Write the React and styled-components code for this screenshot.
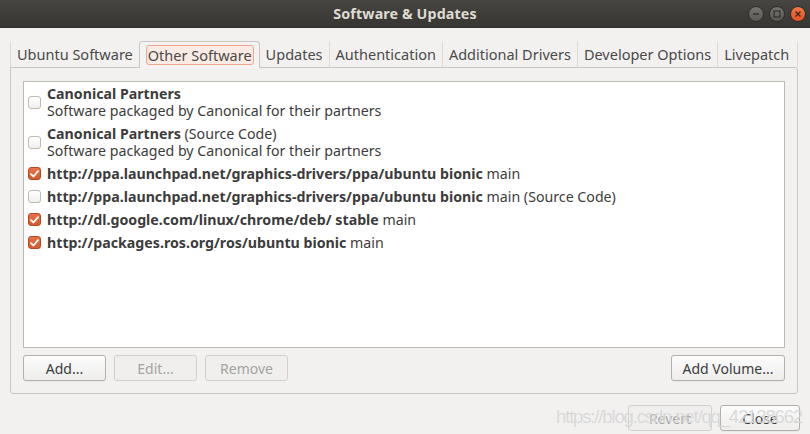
import React from "react";
import styled, { createGlobalStyle, css } from "styled-components";

const GlobalStyle = createGlobalStyle`
  html, body { margin: 0; padding: 0; background: #f2f1f0; }
  body { font-family: "Noto Sans", "Open Sans", "DejaVu Sans", sans-serif; }
  * { box-sizing: border-box; }
`;

const Window = styled.div`
  position: relative;
  width: 810px;
  height: 434px;
  overflow: hidden;
  background: #f2f1f0;
  display: flex;
  flex-direction: column;
  color: #3c3c3c;
  font-size: 14px;
`;

const TitleBar = styled.div`
  height: 28px;
  flex: none;
  display: grid;
  grid-template-columns: 1fr auto 1fr;
  align-items: center;
  background: linear-gradient(#474642, #3c3b37 60%, #383733);
  border-bottom: 1px solid #2f2e2b;
`;

const Title = styled.div`
  grid-column: 2;
  color: #dfdbd2;
  font-weight: bold;
  font-size: 14.3px;
  letter-spacing: 0.1px;
`;

const Controls = styled.div`
  grid-column: 3;
  justify-self: end;
  display: flex;
  gap: 5px;
  padding-right: 4px;
`;

const CircleBtn = styled.div`
  width: 16px;
  height: 16px;
  border-radius: 50%;
  display: flex;
  align-items: center;
  justify-content: center;
  border: 1px solid #2e2d2a;
  ${(p) =>
    p.$close
      ? css`background: linear-gradient(#f5774a, #e4501f);`
      : css`background: linear-gradient(#76746f, #5a5854);`}
`;

const Content = styled.div`
  flex: 1;
  display: flex;
  flex-direction: column;
  padding: 13px 12px 0 10px;
`;

const TabStrip = styled.div`
  display: flex;
  align-items: flex-end;
  height: 26px;
`;

const Tab = styled.div`
  position: relative;
  height: 26px;
  display: flex;
  align-items: center;
  padding: 0 6px;
  color: #4a4a48;
  font-size: 14.5px;
  white-space: nowrap;
  ${(p) =>
    p.$active
      ? css`
          height: 27px;
          margin-bottom: -1px;
          z-index: 1;
          padding: 0 5px 0 6px;
          background: #f4f3f2;
          border: 1px solid #c9c5c0;
          border-bottom: none;
          border-radius: 4px 4px 0 0;
        `
      : css`
          border-left: ${p.$noLeft ? "none" : "1px solid #dedbd7"};
          border-right: ${p.$last ? "1px solid #dedbd7" : "none"};
        `}
  ${(p) => p.$last && css`flex: 1;`}
`;

const FocusLabel = styled.span`
  border: 1px solid #eea68c;
  background: #fbebe5;
  border-radius: 3px;
  padding: 0 1px;
  line-height: 18px;
`;

const Frame = styled.div`
  border: 1px solid #c9c5c0;
  border-radius: 0 3px 3px 3px;
  padding: 13px 12px 12px 12px;
  display: flex;
  flex-direction: column;
`;

const List = styled.div`
  height: 267px;
  background: #ffffff;
  border: 1px solid #bcb8b3;
  display: flex;
  flex-direction: column;
`;

const Row = styled.div`
  display: flex;
  align-items: center;
  padding: 3px 4px;
  gap: 6px;
`;

const Check = styled.div`
  flex: none;
  width: 13px;
  height: 13px;
  border-radius: 3px;
  display: flex;
  align-items: center;
  justify-content: center;
  ${(p) =>
    p.$on
      ? css`
          background: linear-gradient(#e8714a, #d55a2e);
          border: 1px solid #b4491f;
        `
      : css`
          background: linear-gradient(#ffffff, #f1f0ef);
          border: 1px solid #bdb9b4;
        `}
`;

const Label = styled.div`
  line-height: 17px;
  font-size: 14.2px;
  color: #3c3c3c;
  white-space: nowrap;
`;

const B = styled.b`
  font-weight: bold;
`;

const ButtonRow = styled.div`
  margin-top: 7px;
  display: flex;
  gap: 8px;
`;

const Button = styled.div`
  height: 26px;
  min-width: ${(p) => p.$w || 83}px;
  padding: 0 10px;
  display: flex;
  align-items: center;
  justify-content: center;
  border-radius: 3px;
  font-size: 14px;
  ${(p) =>
    p.$disabled
      ? css`
          color: #a3a3a2;
          border: 1px solid #d3d0cc;
          background: #f0efee;
        `
      : css`
          color: #3c3c3c;
          border: 1px solid #b3afaa;
          background: linear-gradient(#fcfcfc, #eeedec);
          box-shadow: 0 1px 0 rgba(0, 0, 0, 0.04);
        `}
  ${(p) => p.$push && css`margin-left: auto;`}
`;

const DialogActions = styled.div`
  margin-top: 11px;
  display: flex;
  justify-content: flex-end;
  gap: 8px;
  margin-right: -2px;
`;

const Watermark = styled.div`
  position: absolute;
  left: 556px;
  top: 406px;
  font-family: "Liberation Sans", Arial, sans-serif;
  font-size: 18.5px;
  letter-spacing: -1.15px;
  color: rgba(205, 205, 205, 0.75);
  text-shadow: 0 0 1px rgba(255, 255, 255, 0.6);
  pointer-events: none;
  white-space: nowrap;
`;

const CheckMark = () => (
  <svg width="9" height="8" viewBox="0 0 9 8">
    <path d="M1 4.2 L3.5 6.5 L8 1.2" fill="none" stroke="#ffffff" strokeWidth="1.8" strokeLinecap="round" strokeLinejoin="round" />
  </svg>
);

const tabs = [
  "Ubuntu Software",
  "Other Software",
  "Updates",
  "Authentication",
  "Additional Drivers",
  "Developer Options",
  "Livepatch",
];

const sources = [
  { on: false, content: (<><B>Canonical Partners</B><br />Software packaged by Canonical for their partners</>) },
  { on: false, content: (<><B>Canonical Partners</B> (Source Code)<br />Software packaged by Canonical for their partners</>) },
  { on: true, content: (<><B>http://ppa.launchpad.net/graphics-drivers/ppa/ubuntu bionic</B> main</>) },
  { on: false, content: (<><B>http://ppa.launchpad.net/graphics-drivers/ppa/ubuntu bionic</B> main (Source Code)</>) },
  { on: true, content: (<><B>http://dl.google.com/linux/chrome/deb/ stable</B> main</>) },
  { on: true, content: (<><B>http://packages.ros.org/ros/ubuntu bionic</B> main</>) },
];

export default function App() {
  const activeIndex = 1;
  return (
    <>
      <GlobalStyle />
      <Window>
        <TitleBar>
          <Title>Software &amp; Updates</Title>
          <Controls>
            <CircleBtn>
              <svg width="8" height="8" viewBox="0 0 8 8">
                <path d="M1 4 H7" stroke="#34332f" strokeWidth="1.5" />
              </svg>
            </CircleBtn>
            <CircleBtn>
              <svg width="8" height="8" viewBox="0 0 8 8">
                <rect x="1" y="1" width="6" height="6" fill="none" stroke="#34332f" strokeWidth="1.3" />
              </svg>
            </CircleBtn>
            <CircleBtn $close>
              <svg width="8" height="8" viewBox="0 0 8 8">
                <path d="M1.5 1.5 L6.5 6.5 M6.5 1.5 L1.5 6.5" stroke="#3a2a22" strokeWidth="1.4" />
              </svg>
            </CircleBtn>
          </Controls>
        </TitleBar>
        <Content>
          <TabStrip>
            {tabs.map((t, i) => (
              <Tab
                key={t}
                $active={i === activeIndex}
                $noLeft={i === activeIndex + 1}
                $last={i === tabs.length - 1}
              >
                {i === activeIndex ? <FocusLabel>{t}</FocusLabel> : t}
              </Tab>
            ))}
          </TabStrip>
          <Frame>
            <List>
              {sources.map((s, i) => (
                <Row key={i}>
                  <Check $on={s.on}>{s.on && <CheckMark />}</Check>
                  <Label>{s.content}</Label>
                </Row>
              ))}
            </List>
            <ButtonRow>
              <Button>Add...</Button>
              <Button $disabled>Edit...</Button>
              <Button $disabled>Remove</Button>
              <Button $push $w={114}>Add Volume...</Button>
            </ButtonRow>
          </Frame>
          <DialogActions>
            <Button $disabled $w={84}>Revert</Button>
            <Button $w={80}>Close</Button>
          </DialogActions>
        </Content>
        <Watermark>https://blog.csdn.net/qq_42138662</Watermark>
      </Window>
    </>
  );
}
